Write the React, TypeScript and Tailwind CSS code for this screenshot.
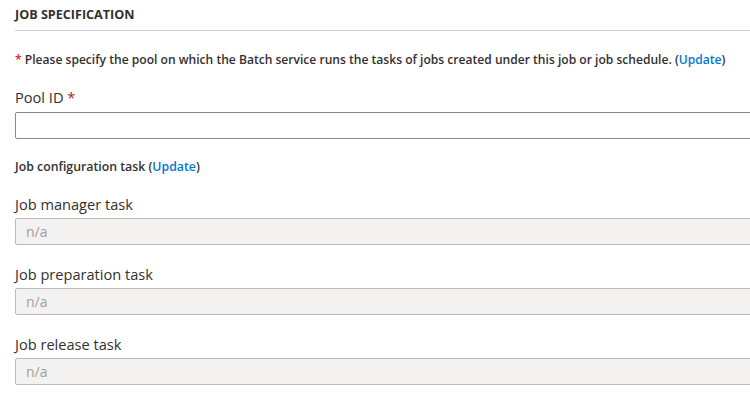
import React from 'react';

const font = { fontFamily: '"Segoe UI", "Open Sans", "Noto Sans", sans-serif' };

const DisabledField: React.FC<{ label: string; top: string }> = ({ label, top }) => (
  <div>
    <div className={`${top} h-[20px] text-[14.6px] leading-[20px] text-[#323130]`}>{label}</div>
    <div className="mt-[4px] h-[27px] w-[745px] rounded-[2px] border border-[#bdbbb9] bg-[#f3f2f1] pl-[10px] text-[14px] leading-[25px] text-[#a19f9d]">
      n/a
    </div>
  </div>
);

export default function App() {
  return (
    <div className="h-[400px] w-[750px] overflow-hidden bg-white pl-[15px]" style={font}>
      <div className="h-[31px] border-b border-[#d2d0ce] pt-[5px] text-[12.6px] font-bold leading-[20px] text-[#323130]">
        JOB SPECIFICATION
      </div>
      <p className="mt-[19px] h-[20px] whitespace-nowrap text-[12.08px] font-semibold leading-[20px] text-[#323130]">
        <span className="text-[#e81123]">*</span> Please specify the pool on which the Batch service runs the tasks of jobs created under this job or job schedule. (<span className="text-[#0078d4]">Update</span>)
      </p>
      <div className="mt-[17px] h-[20px] text-[14.6px] leading-[20px] text-[#323130]">
        Pool ID <span className="text-[#a4262c]">*</span>
      </div>
      <div className="mt-[5px] h-[27px] w-[745px] rounded-[2px] border border-[#8a8886] bg-white" />
      <p className="mt-[18px] h-[20px] text-[12.3px] font-semibold leading-[20px] text-[#323130]">
        Job configuration task (<span className="text-[#0078d4]">Update</span>)
      </p>
      <DisabledField label="Job manager task" top="mt-[17px]" />
      <DisabledField label="Job preparation task" top="mt-[19px]" />
      <DisabledField label="Job release task" top="mt-[19px]" />
    </div>
  );
}
